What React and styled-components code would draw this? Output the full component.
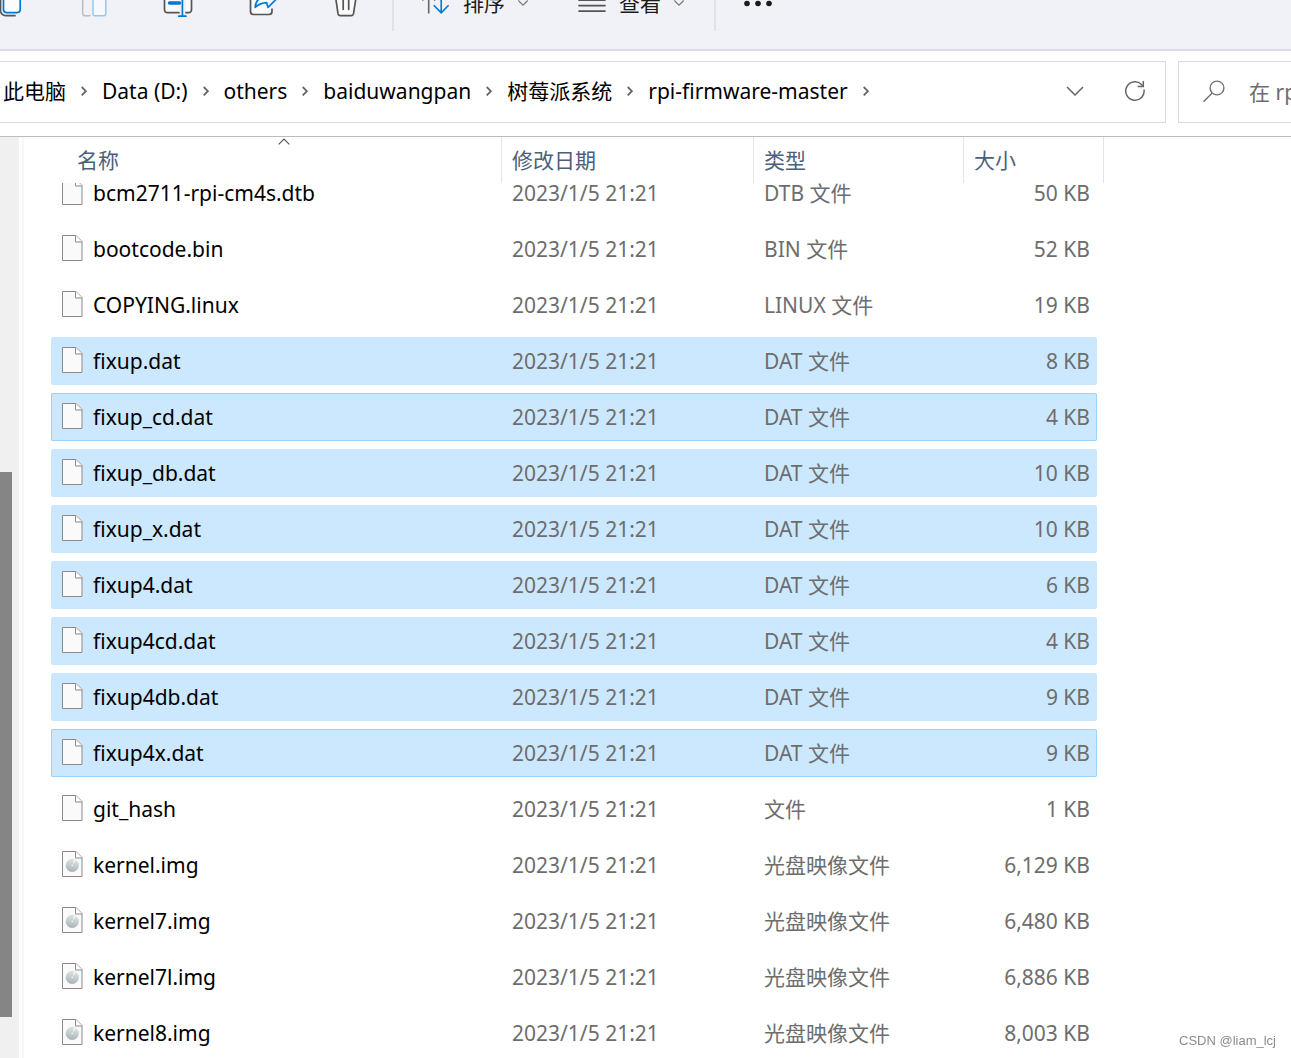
/*
 **Comments:
 **	file explorer window: command bar, address bar and the details list
 */

import React from 'react';
import styled, { createGlobalStyle } from 'styled-components';

const GlobalStyle = createGlobalStyle`
    * {
        box-sizing: border-box;
    }

    body {
        margin: 0;
        background: #fff;
        overflow: hidden;
    }

    body, button, input {
        font-family: 'Noto Sans', 'Noto Sans CJK SC', sans-serif;
        font-size: 21px;
        line-height: 28px;
    }

    button {
        padding: 0;
        border: 0;
        background: none;
        color: inherit;
    }

    svg {
        display: block;
        flex: none;
        fill: none;
    }
`;

//styled-component styles
const Window = styled.div`
    display: flex;
    flex-direction: column;
    height: 100vh;
    overflow: hidden;
`;

const CommandBar = styled.header`
    display: flex;
    flex: none;
    align-items: flex-end;
    height: 51px;
    overflow: hidden;
    background: #f1f2f7;
    border-bottom: 2px solid #dcdde4;
`;

const CommandRow = styled.div`
    display: flex;
    align-items: center;
    height: 92px;
    margin-left: -32px;
`;

const IconButton = styled.button`
    display: flex;
    justify-content: center;
    width: 84px;
`;

const MenuButton = styled.button`
    display: flex;
    align-items: center;
    gap: 13px;
    padding: 0 24px;
    color: #1b1b1b;
`;

const Divider = styled.span`
    width: 2px;
    height: 56px;
    margin: 0 4px;
    background: #e1e2e8;
`;

const AddressRow = styled.div`
    display: flex;
    flex: none;
    gap: 12px;
    padding: 10px 0 13px;
    border-bottom: 1px solid #bcbcbc;
`;

const AddressBox = styled.nav`
    display: flex;
    flex: 1;
    align-items: center;
    height: 62px;
    padding: 0 18px 2px 3px;
    border: 1px solid #d9d9d9;
    border-left: 0;
`;

const Crumbs = styled.ol`
    display: flex;
    flex: 1;
    margin: 0;
    padding: 0;
    list-style: none;
    white-space: nowrap;
`;

const Crumb = styled.li`
    display: flex;
    align-items: center;

    a {
        color: #000;
        text-decoration: none;
    }
`;

const CrumbArrow = styled.span`
    display: flex;
    justify-content: center;
    width: 36px;
`;

const AddressButton = styled.button`
    display: flex;
    justify-content: center;
    align-items: center;
    width: ${props => props.$wide ? '96px' : '24px'};
    height: 58px;
`;

const SearchBox = styled.label`
    display: flex;
    flex: 0 0 113px;
    align-items: center;
    gap: 22px;
    height: 62px;
    padding-left: 24px;
    border: 1px solid #d9d9d9;
    border-right: 0;
    overflow: hidden;
`;

const SearchInput = styled.input`
    flex: 1;
    min-width: 0;
    padding: 0;
    border: 0;
    outline: 0;
    background: none;

    &::placeholder {
        color: #6d6d6d;
        opacity: 1;
    }
`;

const Content = styled.div`
    display: flex;
    flex: 1;
    min-height: 0;
`;

const NavScroll = styled.div`
    display: flex;
    flex: none;
    flex-direction: column;
    width: 19px;
    background: #f0f0f0;
`;

const ScrollSpace = styled.div`
    flex: ${props => props.$part};
`;

const ScrollThumb = styled.div`
    flex: 545;
    width: 12px;
    background: #858585;
`;

const Splitter = styled.div`
    flex: none;
    width: 5px;
    border-right: 2px solid #f6f6f6;
`;

const ListPane = styled.main`
    flex: 1;
    min-width: 0;
    padding-left: 27px;
    overflow: auto;
    scrollbar-width: none;
`;

const FileTable = styled.table`
    table-layout: fixed;
    width: 1053px;
    border-spacing: 0 8px;
`;

const Col = styled.col`
    width: ${props => props.$width}px;
`;

const HeadCell = styled.th`
    position: sticky;
    top: 0;
    z-index: 1;
    height: 46px;
    padding: 0;
    background: #fff;
    border-right: 1px solid #e5e5e5;
    color: #4c607a;
    font-weight: 400;
    text-align: left;
`;

const HeadButton = styled.button`
    display: grid;
    grid-template-rows: 8px 30px 8px;
    align-items: center;
    width: 100%;
    padding-left: ${props => props.$first ? '16px' : '0'};
    text-align: left;

    svg {
        justify-self: center;
    }

    span {
        grid-row: 2;
        padding-left: 10px;
    }
`;

const Cell = styled.td`
    height: 48px;
    padding: 0 7px 0 10px;
    border: 0 solid ${props => props.$focused ? '#99d1ff' : 'transparent'};
    border-width: 1px 0;
    background: ${props => props.$selected ? '#cce8ff' : 'transparent'};
    color: #6d6d6d;
    text-align: ${props => props.$right ? 'right' : 'left'};
    white-space: nowrap;

    &:first-child {
        border-left-width: 1px;
        border-radius: 2px 0 0 2px;
        color: #000;
    }

    &:last-child {
        padding-right: 6px;
        border-right-width: 1px;
        border-radius: 0 2px 2px 0;
    }
`;

const FileName = styled.div`
    display: flex;
    align-items: center;
    gap: 10px;

    svg {
        margin-bottom: 2px;
    }
`;

const Watermark = styled.div`
    position: fixed;
    right: 15px;
    bottom: 8px;
    color: #8c8c8c;
    font-family: 'Liberation Sans', Arial, sans-serif;
    font-size: 13px;
    line-height: 18px;
`;

const DARK = '#555';
const BLUE = '#0078d4';

const CopyIcon = () => (
    <svg width="32" height="32" viewBox="0 0 32 32" strokeWidth="1.7" strokeLinecap="round">
        <path d="M6.500 5v18.500a5.200 5.200 0 0 0 5.200 5.200H21" stroke={DARK} />
        <rect x="9.500" y="1" width="16.700" height="24.600" rx="3" fill="#fcfcfc" stroke={BLUE} />
    </svg>
);

const PasteIcon = () => (
    <svg width="32" height="32" viewBox="0 0 32 32" strokeWidth="1.5" strokeLinecap="round">
        <path d="M4.700 4v22.500a2.300 2.300 0 0 0 2.300 2.300h5" stroke="#bcbcc0" />
        <rect x="15" y="4" width="12.800" height="24.800" rx="2" fill="#f6f8fb" stroke="#94c8f0" />
    </svg>
);

const RenameIcon = () => (
    <svg width="32" height="32" viewBox="0 0 32 32" strokeWidth="1.7" strokeLinecap="round">
        <path d="M17 25.700H5.500a3 3 0 0 1-3-3V9a3 3 0 0 1 3-3H17M24 6h2.500a3 3 0 0 1 3 3v13.700a3 3 0 0 1-3 3H24" fill="#fafafa" stroke={DARK} />
        <path d="M7.500 16h10" stroke={BLUE} strokeWidth="3.500" />
        <path d="M20.400 3v26M16.800 29.200h7.200" stroke={BLUE} />
    </svg>
);

const ShareIcon = () => (
    <svg width="32" height="32" viewBox="0 0 32 32" strokeWidth="1.7" strokeLinecap="round" strokeLinejoin="round">
        <path d="M10 5H7.500a3 3 0 0 0-3 3v16.500a3 3 0 0 0 3 3H23a3 3 0 0 0 3-3V22" fill="#fafafa" stroke={DARK} />
        <path d="M20.500 4.500l9 8.500-7.500 7.300-1.300-4.600c-5 .2-8.200 1.800-11.500 4.600.3-6 3.300-10.300 11.300-11.300z" fill="#fcfcfc" stroke={BLUE} />
    </svg>
);

const DeleteIcon = () => (
    <svg width="32" height="32" viewBox="0 0 32 32" strokeWidth="1.700" strokeLinecap="round">
        <path d="M5 6l3 20.700a2.500 2.500 0 0 0 2.500 2h10.500a2.500 2.500 0 0 0 2.500-2L26.700 6" fill="#fafafa" stroke={DARK} />
        <path d="M13.200 11v11.300M18.700 11v11.300M3 6h26" stroke={DARK} />
    </svg>
);

const SortIcon = () => (
    <svg width="28" height="32" viewBox="0 0 28 32" strokeWidth="1.600">
        <path d="M6.700 26.500V6M.3 13.500l6.400-7 6.400 7" stroke="#666" />
        <path d="M19.200 5v21M11.800 18.200l7.400 7.600 7.400-7.600" stroke={BLUE} />
    </svg>
);

const ViewIcon = () => (
    <svg width="28" height="32" viewBox="0 0 28 32" strokeWidth="1.700" strokeLinecap="round">
        <path d="M1 7.700h26M1 13.100h26M1 18.600h26M1 24.100h26" stroke={DARK} />
    </svg>
);

const MoreIcon = () => (
    <svg width="28" height="32" viewBox="0 0 28 32">
        <g fill="#1b1b1b">
            <circle cx="3" cy="16.500" r="2.800" />
            <circle cx="14" cy="16.500" r="2.800" />
            <circle cx="25" cy="16.500" r="2.800" />
        </g>
    </svg>
);

const SmallChevron = () => (
    <svg width="12" height="8" viewBox="0 0 12 8">
        <path d="M.3 1.500L5 6.200l4.700-4.700" stroke="#777" strokeWidth="1.200" />
    </svg>
);

const DropChevron = () => (
    <svg width="18" height="10" viewBox="0 0 18 10">
        <path d="M1 1l8 8 8-8" stroke="#666" strokeWidth="1.500" />
    </svg>
);

const RefreshIcon = () => (
    <svg width="22" height="22" viewBox="0 0 22 22" stroke="#666" strokeWidth="1.500">
        <path d="M20 9.500a9.200 9.200 0 1 1-2.800-5.200l1.800 1.700" />
        <path d="M19.300 1v5.500h-5.600" />
    </svg>
);

const SearchIcon = () => (
    <svg width="24" height="24" viewBox="0 0 24 24" stroke="#707070" strokeWidth="1.400">
        <circle cx="14" cy="8" r="6.900" />
        <path d="M9.200 13L.5 21.700" />
    </svg>
);

const CrumbChevron = () => (
    <svg width="8" height="10" viewBox="0 0 8 10">
        <path d="M1.700 1l4.200 4.200-4.200 4.200" stroke="#666" strokeWidth="1.800" />
    </svg>
);

const SortMark = () => (
    <svg width="12" height="7" viewBox="0 0 12 7">
        <path d="M.7 6.300L6 1l5.300 5.300" stroke="#555" strokeWidth="1.200" />
    </svg>
);

const FileIcon = ({ disc }) => (
    <svg width="21" height="26" viewBox="0 0 21 26">
        <defs>
            <linearGradient id="disc" x1=".6" y1="0" x2=".4" y2="1">
                <stop offset="0" stopColor="#dde3e5" />
                <stop offset=".5" stopColor="#c6ced1" />
                <stop offset="1" stopColor="#a9b1b4" />
            </linearGradient>
        </defs>
        <path d="M.5.500h13.500l6 6v19H.5z" fill="#fafafa" stroke="#8a8a8a" />
        <path d="M13.500.500v6.500H20" fill="#fff" stroke="#8a8a8a" />
        {disc && (
            <g>
                <circle cx="10.300" cy="14.300" r="6.600" fill="url(#disc)" />
                <path d="M10.300 14.300l1.500-6.300a6.500 6.500 0 0 1 3 1.700z" fill="#e9eeef" />
                <circle cx="10.300" cy="14.300" r="1.800" fill="#dde2e4" stroke="#b8c0c3" strokeWidth=".6" />
            </g>
        )}
    </svg>
);

const crumbs = ['此电脑', 'Data (D:)', 'others', 'baiduwangpan', '树莓派系统', 'rpi-firmware-master'];

const files = [
    { name: 'bcm2711-rpi-cm4s.dtb', type: 'DTB 文件', size: '50 KB' },
    { name: 'bootcode.bin', type: 'BIN 文件', size: '52 KB' },
    { name: 'COPYING.linux', type: 'LINUX 文件', size: '19 KB' },
    { name: 'fixup.dat', type: 'DAT 文件', size: '8 KB', selected: true },
    { name: 'fixup_cd.dat', type: 'DAT 文件', size: '4 KB', selected: true, focused: true },
    { name: 'fixup_db.dat', type: 'DAT 文件', size: '10 KB', selected: true },
    { name: 'fixup_x.dat', type: 'DAT 文件', size: '10 KB', selected: true },
    { name: 'fixup4.dat', type: 'DAT 文件', size: '6 KB', selected: true },
    { name: 'fixup4cd.dat', type: 'DAT 文件', size: '4 KB', selected: true },
    { name: 'fixup4db.dat', type: 'DAT 文件', size: '9 KB', selected: true },
    { name: 'fixup4x.dat', type: 'DAT 文件', size: '9 KB', selected: true, focused: true },
    { name: 'git_hash', type: '文件', size: '1 KB' },
    { name: 'kernel.img', type: '光盘映像文件', size: '6,129 KB', disc: true },
    { name: 'kernel7.img', type: '光盘映像文件', size: '6,480 KB', disc: true },
    { name: 'kernel7l.img', type: '光盘映像文件', size: '6,886 KB', disc: true },
    { name: 'kernel8.img', type: '光盘映像文件', size: '8,003 KB', disc: true }
];

const FileRow = ({ file }) => {
    const look = { $selected: file.selected, $focused: file.focused };
    return (
        <tr>
            <Cell {...look}>
                <FileName>
                    <FileIcon disc={file.disc} />
                    {file.name}
                </FileName>
            </Cell>
            <Cell {...look}>2023/1/5 21:21</Cell>
            <Cell {...look}>{file.type}</Cell>
            <Cell {...look} $right>{file.size}</Cell>
        </tr>
    );
};

class App extends React.Component {
    constructor(props) {
        super(props);
        this.list = React.createRef();
    }

    componentDidMount() {
        // the list opens a little way down, first row half under the header
        this.list.current.scrollTop = 30;
    }

    render() {
        return (
            <Window>
                <GlobalStyle />
                <CommandBar>
                    <CommandRow>
                        <IconButton aria-label="复制"><CopyIcon /></IconButton>
                        <IconButton aria-label="粘贴" disabled><PasteIcon /></IconButton>
                        <IconButton aria-label="重命名"><RenameIcon /></IconButton>
                        <IconButton aria-label="共享"><ShareIcon /></IconButton>
                        <IconButton aria-label="删除"><DeleteIcon /></IconButton>
                        <Divider />
                        <MenuButton><SortIcon />排序<SmallChevron /></MenuButton>
                        <MenuButton><ViewIcon />查看<SmallChevron /></MenuButton>
                        <Divider />
                        <MenuButton aria-label="查看更多"><MoreIcon /></MenuButton>
                    </CommandRow>
                </CommandBar>
                <AddressRow>
                    <AddressBox>
                        <Crumbs>
                            {crumbs.map(name => (
                                <Crumb key={name}>
                                    <a href="#">{name}</a>
                                    <CrumbArrow><CrumbChevron /></CrumbArrow>
                                </Crumb>
                            ))}
                        </Crumbs>
                        <AddressButton $wide aria-label="以前的位置"><DropChevron /></AddressButton>
                        <AddressButton aria-label="刷新"><RefreshIcon /></AddressButton>
                    </AddressBox>
                    <SearchBox>
                        <SearchIcon />
                        <SearchInput type="text" aria-label="搜索" placeholder="在 rpi-firmware-master 中搜索" />
                    </SearchBox>
                </AddressRow>
                <Content>
                    <NavScroll>
                        <ScrollSpace $part={335} />
                        <ScrollThumb />
                        <ScrollSpace $part={41} />
                    </NavScroll>
                    <Splitter />
                    <ListPane ref={this.list}>
                        <FileTable>
                            <colgroup>
                                <Col $width={451} />
                                <Col $width={252} />
                                <Col $width={210} />
                                <Col $width={133} />
                                <Col $width={7} />
                            </colgroup>
                            <thead>
                                <tr>
                                    <HeadCell><HeadButton $first><SortMark /><span>名称</span></HeadButton></HeadCell>
                                    <HeadCell><HeadButton><span>修改日期</span></HeadButton></HeadCell>
                                    <HeadCell><HeadButton><span>类型</span></HeadButton></HeadCell>
                                    <HeadCell colSpan={2}><HeadButton><span>大小</span></HeadButton></HeadCell>
                                </tr>
                            </thead>
                            <tbody>
                                {files.map(file => <FileRow key={file.name} file={file} />)}
                            </tbody>
                        </FileTable>
                    </ListPane>
                </Content>
                <Watermark>CSDN @liam_lcj</Watermark>
            </Window>
        );
    }
}

export default App;
